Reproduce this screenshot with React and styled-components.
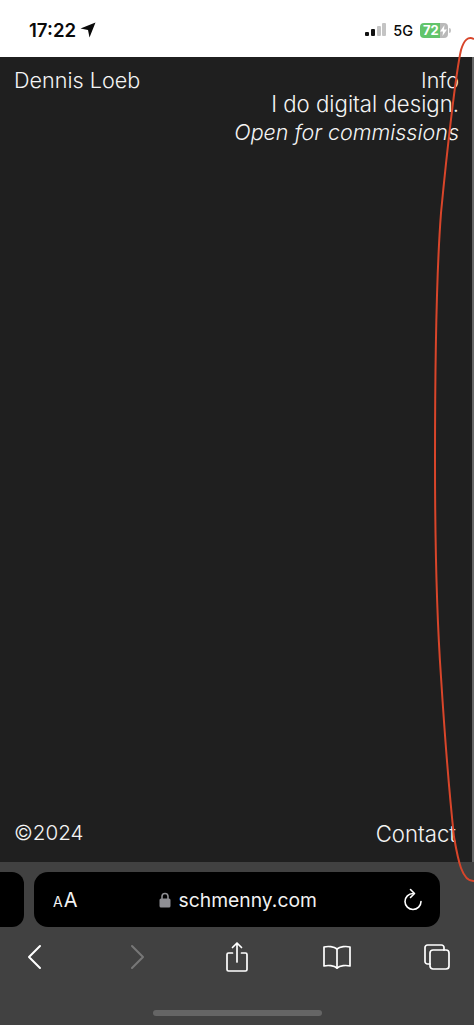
import React from "react";
import styled, { createGlobalStyle } from "styled-components";

const Global = createGlobalStyle`
  html, body { margin: 0; padding: 0; background: #fff; overflow: hidden; }
`;

const Phone = styled.div`
  position: relative;
  width: 474px;
  height: 1025px;
  display: flex;
  flex-direction: column;
  overflow: hidden;
  font-family: Inter, "Liberation Sans", sans-serif;
`;

const StatusBar = styled.div`
  height: 57px;
  flex: none;
  background: #fff;
  display: flex;
  justify-content: space-between;
  align-items: center;
  padding: 3px 23px 0 29px;
  box-sizing: border-box;
  color: #0a0a0a;
`;

const Group = styled.div`
  display: flex;
  align-items: center;
  gap: ${(p) => p.$gap || 6}px;
`;

const Clock = styled.span`
  font-size: 18.6px;
  font-weight: 600;
`;

const Net = styled.span`
  font-size: 14.5px;
  font-weight: 500;
`;

const BatteryWrap = styled.div`
  display: flex;
  align-items: center;
  gap: 1px;
`;

const Battery = styled.div`
  position: relative;
  width: 28px;
  height: 15px;
  border-radius: 4px;
  background: linear-gradient(90deg, #62c46b 72%, #b9b9b9 72%);
  color: #fff;
  font-size: 13px;
  font-weight: 700;
  line-height: 15px;
  padding-left: 3px;
  box-sizing: border-box;
`;

const Bolt = styled.svg`
  position: absolute;
  right: 1px;
  top: 2px;
`;

const BatteryTip = styled.div`
  width: 2px;
  height: 5px;
  border-radius: 0 2px 2px 0;
  background: #c4c4c4;
`;

const Page = styled.main`
  flex: 1;
  background: #1f1f1f;
  border-right: 2px solid #666;
  color: #f4f4f4;
  font-size: 21.5px;
  font-weight: 350;
  display: flex;
  flex-direction: column;
  justify-content: space-between;
  padding: 11px 13px 15px 14px;
`;

const Row = styled.div`
  display: flex;
  justify-content: space-between;
  align-items: flex-start;
`;

const Name = styled.span`
  font-size: 21.6px;
  line-height: 24px;
`;

const Intro = styled.div`
  text-align: right;
  line-height: 24px;
`;

const Tagline = styled.div`
  font-size: 22.2px;
`;

const Em = styled.div`
  font-style: italic;
  font-size: 21.5px;
  margin-top: 4px;
`;

const Copy = styled.span`
  font-size: 20.6px;
`;

const ContactLink = styled.span`
  font-size: 22.2px;
  margin-right: 3px;
`;

const Toolbar = styled.div`
  height: 163px;
  flex: none;
  background: #414141;
  display: flex;
  flex-direction: column;
  position: relative;
`;

const Tabs = styled.div`
  display: flex;
  gap: 10px;
  margin: 10px 0 0 -40px;
`;

const PrevTab = styled.div`
  width: 64px;
  height: 55px;
  background: #000;
  border-radius: 12px;
`;

const UrlBar = styled.div`
  width: 406px;
  height: 55px;
  background: #000;
  border-radius: 14px;
  color: #f2f2f2;
  display: flex;
  align-items: center;
  justify-content: space-between;
  padding: 0 16px 0 19px;
  box-sizing: border-box;
`;

const Aa = styled.span`
  font-size: 20px;
  font-weight: 400;
  small { font-size: 14px; margin-right: 1px; }
`;

const Address = styled.div`
  display: flex;
  align-items: center;
  gap: 8px;
  font-size: 19.3px;
  font-weight: 400;
  margin-right: 4px;
`;

const Nav = styled.nav`
  display: flex;
  align-items: center;
  gap: 70px;
  padding-left: 20px;
  margin-top: 14px;
  height: 32px;
`;

const Slot = styled.div`
  width: 30px;
  display: flex;
  justify-content: center;
  margin-left: ${(p) => p.$nudge || 0}px;
`;

const HomeBar = styled.div`
  position: absolute;
  left: 153px;
  bottom: 9px;
  width: 169px;
  height: 6px;
  border-radius: 3px;
  background: #656565;
`;

const Annotation = styled.svg`
  position: absolute;
  left: 0;
  top: 0;
  pointer-events: none;
`;

const Icon = ({ children, w = 30, h = 30, color = "#fff", sw = 2 }) => (
  <svg width={w} height={h} viewBox={`0 0 ${w} ${h}`} fill="none" stroke={color} strokeWidth={sw} strokeLinecap="round" strokeLinejoin="round">
    {children}
  </svg>
);

export default function App() {
  return (
    <Phone>
      <Global />
      <StatusBar>
        <Group $gap={4}>
          <Clock>17:22</Clock>
          <svg width="16" height="16" viewBox="0 0 16 16"><path d="M15.500 .5 L0.500 6.500 L8 8 L9.500 15.500 Z" fill="#0a0a0a" /></svg>
        </Group>
        <Group $gap={7}>
          <svg width="21" height="14" viewBox="0 0 21 14">
            <rect x="0" y="9" width="4" height="4" rx="1" fill="#111" />
            <rect x="6" y="6" width="4" height="7" rx="1" fill="#111" />
            <rect x="12" y="3" width="4" height="10" rx="1" fill="#c4c4c4" />
            <rect x="17" y="0" width="4" height="13" rx="1" fill="#c4c4c4" />
          </svg>
          <Net>5G</Net>
          <BatteryWrap>
            <Battery>
              72
              <Bolt width="7" height="11" viewBox="0 0 7 11"><path d="M4.500 0 L0 6.500 H3 L2.500 11 L7 4.500 H4 Z" fill="#fff" /></Bolt>
            </Battery>
            <BatteryTip />
          </BatteryWrap>
        </Group>
      </StatusBar>
      <Page>
        <Row>
          <Name>Dennis Loeb</Name>
          <Intro>
            <div>Info</div>
            <Tagline>I do digital design.</Tagline>
            <Em>Open for commissions</Em>
          </Intro>
        </Row>
        <Row>
          <Copy>©2024</Copy>
          <ContactLink>Contact</ContactLink>
        </Row>
      </Page>
      <Toolbar>
        <Tabs>
          <PrevTab />
          <UrlBar>
            <Aa><small>A</small>A</Aa>
            <Address>
              <svg width="12" height="16" viewBox="0 0 12 16">
                <path d="M3 7V4.500a3 3 0 0 1 6 0V7" fill="none" stroke="#8e8e93" strokeWidth="1.600" />
                <rect x="0.500" y="6.500" width="11" height="9" rx="1.500" fill="#8e8e93" />
              </svg>
              schmenny.com
            </Address>
            <Icon w={22} h={24} sw={1.6}>
              <path d="M11 5.500a8 8 0 1 0 8 8" />
              <path d="M8.500 1.500 L12.500 5.500 L8.500 9.500" />
            </Icon>
          </UrlBar>
        </Tabs>
        <Nav>
          <Slot>
            <Icon w={16} h={26} sw={2}><path d="M13 2 L2 13 L13 24" /></Icon>
          </Slot>
          <Slot $nudge={3}>
            <Icon w={16} h={26} sw={2} color="#777"><path d="M2 2 L13 13 L2 24" /></Icon>
          </Slot>
          <Slot $nudge={-1}>
            <Icon w={26} h={32} sw={1.7}>
              <path d="M8.500 12H4.500A1.500 1.500 0 0 0 3 13.500v15A1.500 1.500 0 0 0 4.500 30h17a1.500 1.500 0 0 0 1.500-1.500v-15a1.500 1.500 0 0 0-1.500-1.500H17.500" />
              <path d="M13 21V2 M8.500 6.500 L13 2 L17.500 6.500" />
            </Icon>
          </Slot>
          <Slot>
            <Icon w={30} h={26} sw={1.7}>
              <path d="M15 5C12 2.500 6 2 2 3v19c4-1 10-.5 13 2c3-2.500 9-3 13-2V3c-4-1-10-.5-13 2z" />
              <path d="M15 5v19" />
            </Icon>
          </Slot>
          <Slot>
            <Icon w={28} h={28} sw={1.7}>
              <path d="M7 21H4.500A2.500 2.500 0 0 1 2 18.500V4.500A2.500 2.500 0 0 1 4.500 2h14A2.500 2.500 0 0 1 21 4.500V7" />
              <rect x="7" y="7" width="19" height="19" rx="3" />
            </Icon>
          </Slot>
        </Nav>
        <HomeBar />
      </Toolbar>
      <Annotation width="474" height="1025" viewBox="0 0 474 1025" fill="none">
        <path d="M474 39 C468 36 464 40 461 50 C456 72 447 150 441 213 C437 265 435 350 435 460 C435 560 437 620 441 677 C445 740 449 790 454 837 C458 860 462 882 474 881" stroke="#d8452a" strokeWidth="2" />
      </Annotation>
    </Phone>
  );
}
